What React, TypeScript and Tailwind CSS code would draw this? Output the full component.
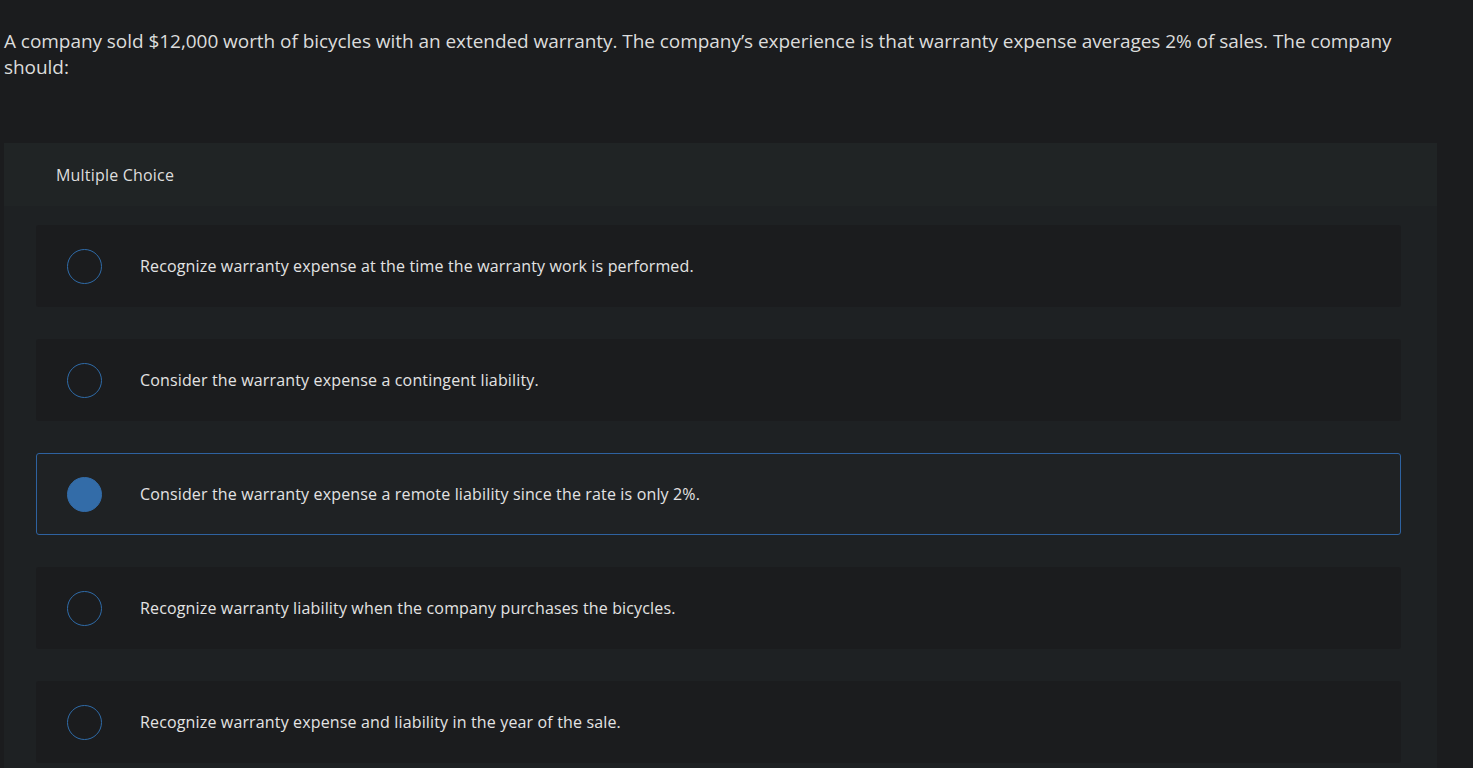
import type { ReactNode } from 'react';

const options = [
  'Recognize warranty expense at the time the warranty work is performed.',
  'Consider the warranty expense a contingent liability.',
  'Consider the warranty expense a remote liability since the rate is only 2%.',
  'Recognize warranty liability when the company purchases the bicycles.',
  'Recognize warranty expense and liability in the year of the sale.',
];

const selected = 2;

function Option({ text, checked }: { text: string; checked: boolean }): ReactNode {
  return (
    <div
      className={`flex h-[82px] items-center rounded-[3px] border ${
        checked ? 'border-[#2e62a0] bg-[#1f2224]' : 'border-transparent bg-[#1b1c1e]'
      }`}
    >
      <span
        className={`ml-[30px] h-[35px] w-[35px] shrink-0 rounded-full border-[1.5px] ${
          checked ? 'border-[#336ca8] bg-[#336ca8]' : 'border-[#2f6ba8]'
        }`}
      />
      <span className="ml-[38px] text-[16px] tracking-[0.15px] text-[#e3e3e3]">{text}</span>
    </div>
  );
}

export default function App(): ReactNode {
  return (
    <div className="min-h-[768px] bg-[#1b1c1e] font-['Open_Sans',sans-serif]">
      <p className="w-[1420px] px-[4px] pt-[28px] text-[19px] leading-[26px] tracking-[-0.05px] text-[#dcdcdc]">
        A company sold $12,000 worth of bicycles with an extended warranty. The company’s experience is
        that warranty expense averages 2% of sales. The company should:
      </p>

      <div className="mt-[63px] ml-[4px] w-[1433px] rounded-t-[4px] bg-[#1e2123] pb-6">
        <div className="flex h-[63px] items-center bg-[#202425] pl-[52px] text-[16px] tracking-[0.2px] text-[#dedede]">
          Multiple Choice
        </div>
        <div className="ml-[32px] mr-[36px] mt-[19px] flex flex-col gap-[32px]">
          {options.map((o, i) => (
            <Option key={o} text={o} checked={i === selected} />
          ))}
        </div>
      </div>
    </div>
  );
}
